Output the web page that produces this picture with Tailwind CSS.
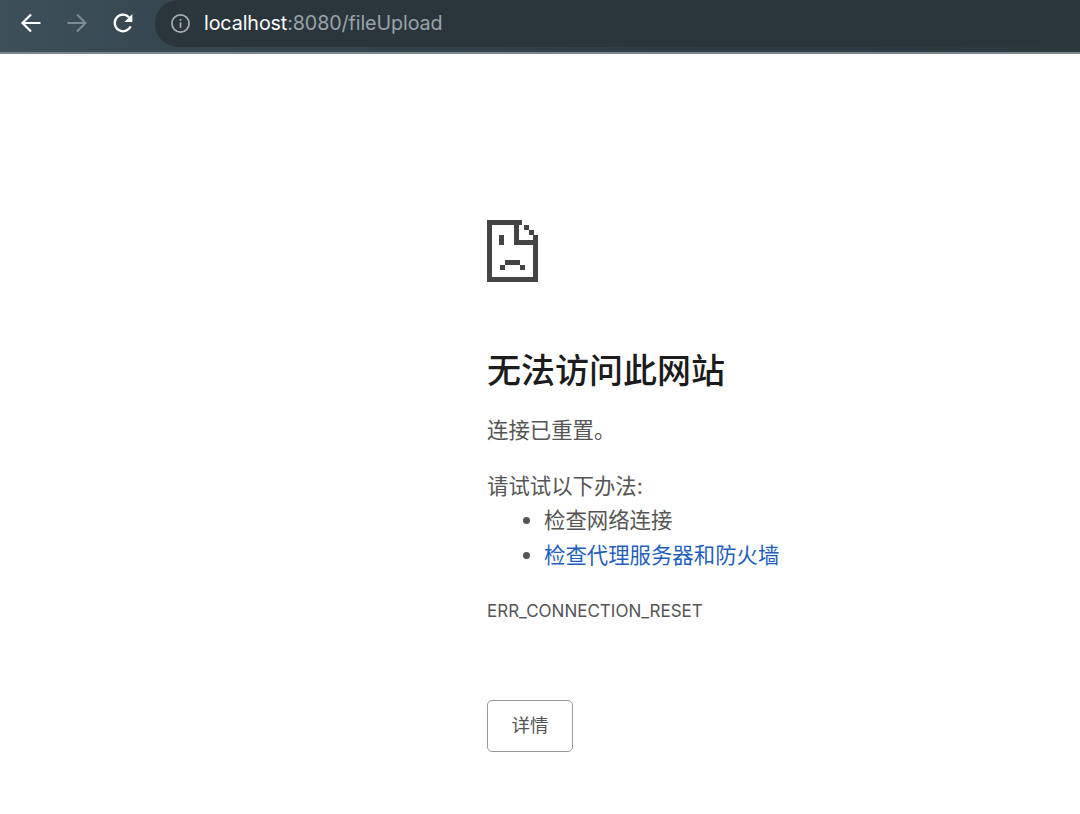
<!DOCTYPE html>
<html lang="zh">
<head>
    <meta charset="UTF-8">
    <title>localhost:8080/fileUpload</title>
    <script src="https://cdn.jsdelivr.net/npm/@tailwindcss/browser@4"></script>
</head>
<body class="bg-white w-[1080px] h-[814px] overflow-hidden font-['Inter','Noto_Sans_CJK_SC',sans-serif]">
    <!-- barra del navegador -->
    <header class="h-[54px] flex items-start bg-gradient-to-r from-[#3e505a] via-[#36474f] via-[15%] to-[#2b383e] border-b-2 border-[#7d868a]">
        <div class="w-[155px] h-[45px] shrink-0 flex items-center pl-[20px] gap-[24px]">
            <svg class="w-[22px] h-[22px]" viewBox="0 0 22 22" fill="none" stroke="#ffffff" stroke-width="2.2"><path d="M20.5 11H2.5M11 2.5 2.5 11l8.5 8.5"/></svg>
            <svg class="w-[22px] h-[22px]" viewBox="0 0 22 22" fill="none" stroke="#7f8c93" stroke-width="2"><path d="M1.5 11h18M11 2.5l8.5 8.5-8.5 8.5"/></svg>
            <svg class="w-[22px] h-[22px]" viewBox="0 0 22 22" fill="none" stroke="#ffffff" stroke-width="2.3"><path d="M18.6 14.4A8.3 8.3 0 1 1 17 5.2"/><path d="M20.4 2v8h-8z" fill="#ffffff" stroke="none"/></svg>
        </div>
        <div class="flex-1 h-[47px] rounded-l-[23px] bg-[#2a363c] flex items-center pl-[15px] gap-[13px]">
            <svg class="w-[21px] h-[21px]" viewBox="0 0 21 21" fill="none" stroke="#a6adb1" stroke-width="1.7"><circle cx="10.5" cy="10.5" r="8.6"/><path d="M10.5 9.3v5.4M10.5 6v1.8"/></svg>
            <p class="text-[19.7px] tracking-[-0.1px] text-[#9ba3a8]"><span class="text-white">localhost</span>:8080/fileUpload</p>
        </div>
    </header>

    <main class="pl-[487px] pt-[166px]">
        <svg class="w-[51px] h-[62px] block" viewBox="0 0 51 62" fill="#444444" shape-rendering="crispEdges">
            <path d="M0 0h35v5H5v52h41V25h5v37H0z"/>
            <path d="M27 5h5v15h19v5H27z"/>
            <rect x="37" y="5" width="5" height="5"/>
            <rect x="42" y="10" width="5" height="5"/>
            <rect x="46" y="15" width="5" height="5"/>
            <rect x="12" y="15" width="5" height="10"/>
            <rect x="18" y="40" width="15" height="5"/>
            <rect x="13" y="45" width="5" height="5"/>
            <rect x="33" y="45" width="5" height="5"/>
        </svg>
        <h1 class="mt-[65px] text-[34px] leading-[48px] font-medium text-[#1c1c1c]">无法访问此网站</h1>
        <p class="mt-[18px] text-[21.4px] leading-[34px] text-[#555555]">连接已重置。</p>
        <p class="mt-[22px] text-[21.4px] leading-[34px] text-[#555555]">请试试以下办法:</p>
        <ul class="pl-[57px] text-[21.4px] leading-[34.5px] text-[#555555] list-disc marker:text-[#555555]">
            <li>检查网络连接</li>
            <li><a href="#" class="text-[#1f5fbf]">检查代理服务器和防火墙</a></li>
        </ul>
        <p class="mt-[27px] text-[17px] leading-[24px] text-[#555555]">ERR_CONNECTION_RESET</p>
        <button class="mt-[77px] w-[86px] h-[52px] rounded-[5px] border-[1.5px] border-[#989898] bg-white text-[18.5px] text-[#555555]">详情</button>
    </main>
</body>
</html>
